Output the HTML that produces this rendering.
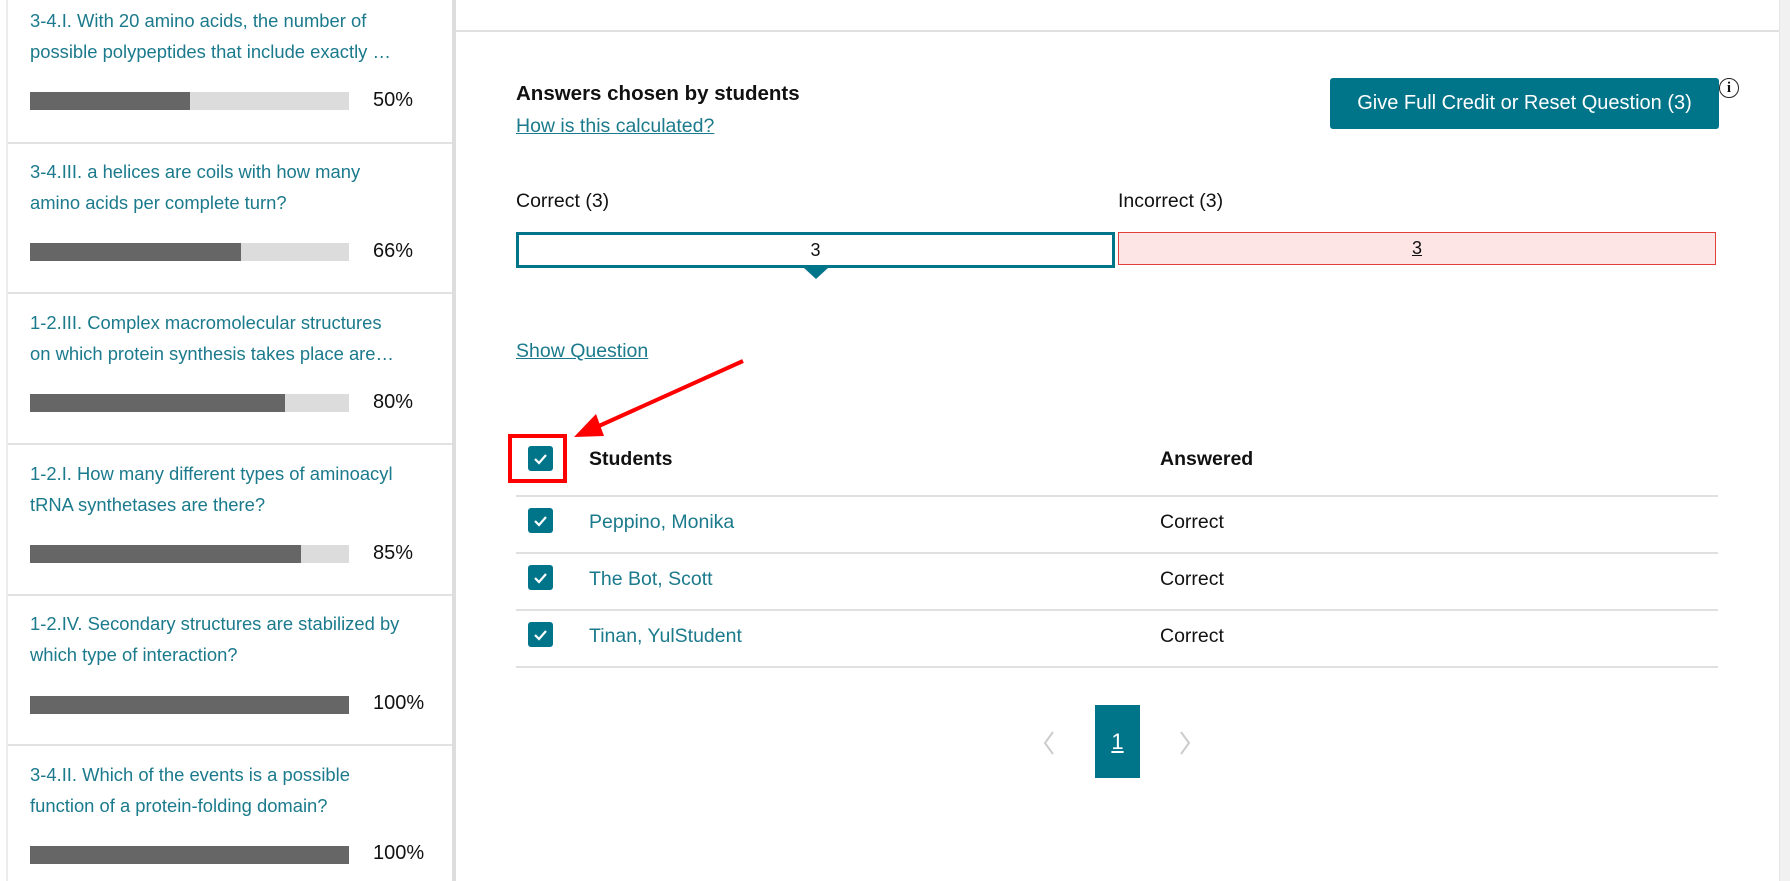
<!DOCTYPE html>
<html><head><meta charset="utf-8"><style>
*{margin:0;padding:0;box-sizing:border-box}
body{width:1790px;height:881px;overflow:hidden;background:#fff;font-family:"Liberation Sans",sans-serif;position:relative;color:#111}
.a{position:absolute;white-space:nowrap}
.sb{position:absolute;left:6px;top:0;width:450px;height:881px;border-left:2px solid #ececec;border-right:4px solid #ddd}
.div{position:absolute;left:8px;width:444px;height:2px;background:#e2e2e2}
.q{position:absolute;left:30px;font-size:18.4px;color:#1b7a8c;line-height:31px;white-space:nowrap}
.bar{position:absolute;left:30px;width:319px;height:18px;background:#dcdcdc}
.bar i{display:block;height:100%;background:#666}
.pct{position:absolute;left:373px;font-size:20px;color:#111}
.cb{position:absolute;left:528px;width:25px;height:25px;background:#00758a;border-radius:3px}
.cb svg{position:absolute;left:4px;top:4px}
.hl{position:absolute;left:516px;width:1202px;height:2px;background:#e0e0e0}
.t{font-size:19.5px}
</style></head><body>
<div class="sb"></div>
<div class="div" style="top:142px"></div>
<div class="div" style="top:292px"></div>
<div class="div" style="top:443px"></div>
<div class="div" style="top:594px"></div>
<div class="div" style="top:744px"></div>

<div class="q" style="top:5px">3-4.I. With 20 amino acids, the number of<br>possible polypeptides that include exactly …</div>
<div class="bar" style="top:92px"><i style="width:50%"></i></div><div class="pct" style="top:89px">50%</div>

<div class="q" style="top:156px">3-4.III. a helices are coils with how many<br>amino acids per complete turn?</div>
<div class="bar" style="top:243px"><i style="width:66%"></i></div><div class="pct" style="top:240px">66%</div>

<div class="q" style="top:307px">1-2.III. Complex macromolecular structures<br>on which protein synthesis takes place are…</div>
<div class="bar" style="top:394px"><i style="width:80%"></i></div><div class="pct" style="top:391px">80%</div>

<div class="q" style="top:458px">1-2.I. How many different types of aminoacyl<br>tRNA synthetases are there?</div>
<div class="bar" style="top:545px"><i style="width:85%"></i></div><div class="pct" style="top:542px">85%</div>

<div class="q" style="top:608px">1-2.IV. Secondary structures are stabilized by<br>which type of interaction?</div>
<div class="bar" style="top:696px"><i style="width:100%"></i></div><div class="pct" style="top:692px">100%</div>

<div class="q" style="top:759px">3-4.II. Which of the events is a possible<br>function of a protein-folding domain?</div>
<div class="bar" style="top:846px"><i style="width:100%"></i></div><div class="pct" style="top:842px">100%</div>

<div class="a" style="left:456px;top:30px;width:1323px;height:2px;background:#e0e0e0"></div>
<div class="a" style="left:1779px;top:0;width:11px;height:881px;background:#f1f1f1;border-left:1px solid #e4e4e4"></div>

<div class="a" style="left:516px;top:82px;font-size:20.5px;font-weight:bold">Answers chosen by students</div>
<div class="a" style="left:516px;top:115px;font-size:19.5px;color:#1b7a8c;text-decoration:underline">How is this calculated?</div>

<div class="a" style="left:1330px;top:78px;width:389px;height:51px;background:#00758a;border-radius:3px;color:#fff;font-size:20px;line-height:51px;text-align:center">Give Full Credit or Reset Question (3)</div>
<div class="a" style="left:1719px;top:78px;width:20px;height:20px;border:1px solid #222;border-radius:50%;font-family:'Liberation Serif',serif;font-weight:bold;font-size:15px;line-height:18px;text-align:center">i</div>

<div class="a t" style="left:516px;top:190px">Correct (3)</div>
<div class="a t" style="left:1118px;top:190px">Incorrect (3)</div>
<div class="a" style="left:516px;top:232px;width:599px;height:36px;border:3px solid #00758a;text-align:center;font-size:18px;line-height:30px">3</div>
<div class="a" style="left:804px;top:268px;width:0;height:0;border-left:12px solid transparent;border-right:12px solid transparent;border-top:11px solid #00758a"></div>
<div class="a" style="left:1118px;top:232px;width:598px;height:33px;border:1px solid #e0403a;background:#fde5e5;text-align:center;font-size:18px;line-height:31px;text-decoration:underline">3</div>

<div class="a" style="left:516px;top:340px;font-size:19.5px;color:#1b7a8c;text-decoration:underline">Show Question</div>

<svg class="a" style="left:0;top:0" width="1790" height="881">
<line x1="743" y1="361" x2="590" y2="430" stroke="#f00" stroke-width="4"/>
<polygon points="574,437 596,414 604,436" fill="#f00"/>
<rect x="510" y="436" width="55" height="45" fill="none" stroke="#f00" stroke-width="4"/>
</svg>

<div class="cb" style="top:446px"><svg width="17" height="17" viewBox="0 0 17 17"><path d="M3 9l4 4 7-8" stroke="#fff" stroke-width="2.2" fill="none"/></svg></div>
<div class="a t" style="left:589px;top:448px;font-weight:bold">Students</div>
<div class="a t" style="left:1160px;top:448px;font-weight:bold">Answered</div>
<div class="hl" style="top:495px"></div>

<div class="cb" style="top:508px"><svg width="17" height="17" viewBox="0 0 17 17"><path d="M3 9l4 4 7-8" stroke="#fff" stroke-width="2.2" fill="none"/></svg></div>
<div class="a t" style="left:589px;top:511px;color:#1b7a8c">Peppino, Monika</div>
<div class="a t" style="left:1160px;top:511px">Correct</div>
<div class="hl" style="top:552px"></div>

<div class="cb" style="top:565px"><svg width="17" height="17" viewBox="0 0 17 17"><path d="M3 9l4 4 7-8" stroke="#fff" stroke-width="2.2" fill="none"/></svg></div>
<div class="a t" style="left:589px;top:568px;color:#1b7a8c">The Bot, Scott</div>
<div class="a t" style="left:1160px;top:568px">Correct</div>
<div class="hl" style="top:609px"></div>

<div class="cb" style="top:622px"><svg width="17" height="17" viewBox="0 0 17 17"><path d="M3 9l4 4 7-8" stroke="#fff" stroke-width="2.2" fill="none"/></svg></div>
<div class="a t" style="left:589px;top:625px;color:#1b7a8c">Tinan, YulStudent</div>
<div class="a t" style="left:1160px;top:625px">Correct</div>
<div class="hl" style="top:666px"></div>

<svg class="a" style="left:1042px;top:730px" width="14" height="26"><path d="M11 2L3 13l8 11" stroke="#ccc" stroke-width="2" fill="none"/></svg>
<div class="a" style="left:1095px;top:705px;width:45px;height:73px;background:#00758a;color:#fff;font-size:22px;line-height:73px;text-align:center;text-decoration:underline">1</div>
<svg class="a" style="left:1178px;top:730px" width="14" height="26"><path d="M3 2l8 11-8 11" stroke="#ccc" stroke-width="2" fill="none"/></svg>
</body></html>
